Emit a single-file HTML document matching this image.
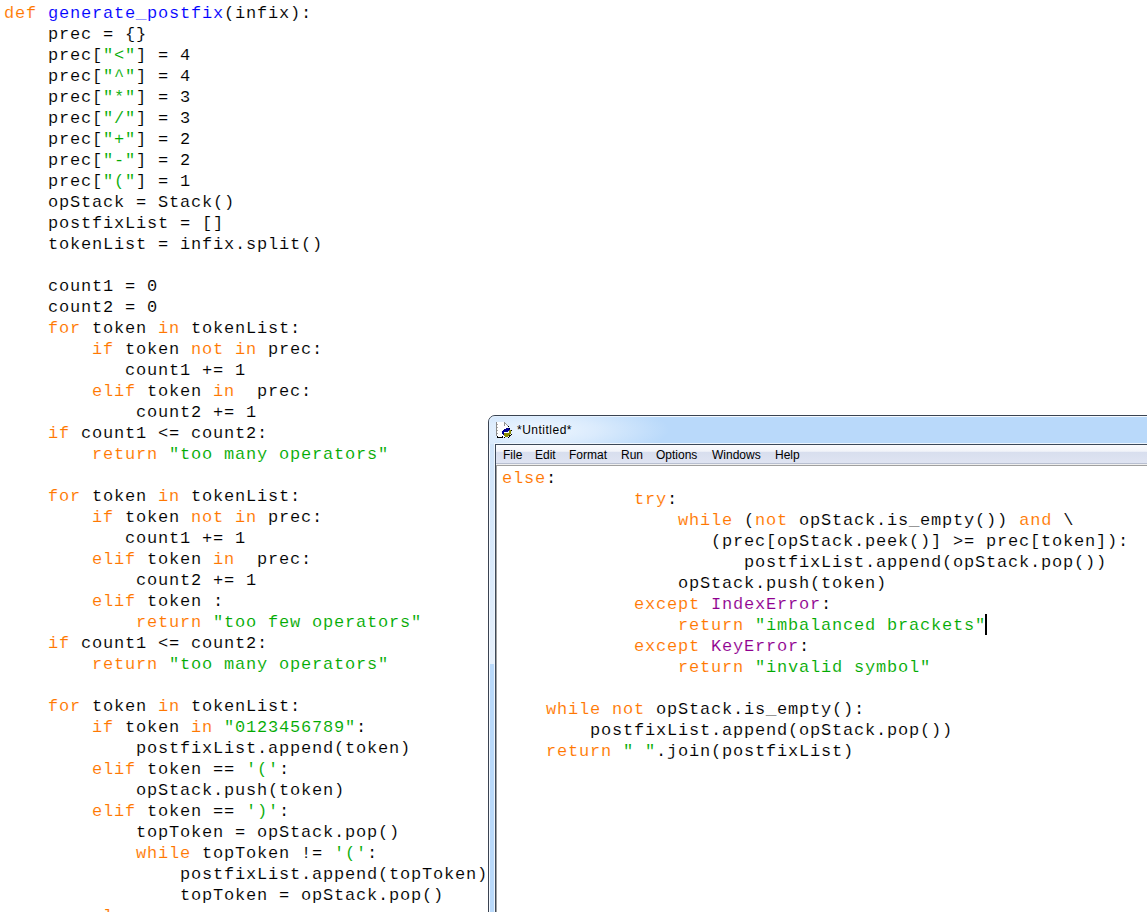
<!DOCTYPE html>
<html><head><meta charset="utf-8">
<style>
html,body{margin:0;padding:0;background:#fff;width:1147px;height:912px;overflow:hidden;position:relative}
.code{position:absolute;margin:0;-webkit-text-stroke:0.1px #fff;font-family:"Liberation Mono",monospace;font-size:17px;letter-spacing:0.8px;line-height:21px;color:#000;white-space:pre}
.k{color:#ff7700}.s{color:#00aa00}.d{color:#0000ff}.b{color:#900090}
#main{left:4px;top:3px}
#win{position:absolute;left:0;top:0;width:1147px;height:912px}
#win>div,#win>svg,#win>pre{position:absolute}
#frame{left:488px;top:415px;width:720px;height:560px;box-sizing:border-box;border:1px solid #3a4351;border-radius:7px 0 0 0;background:#b9d9fa;box-shadow:inset 1px 1px 0 #f4f9ff}
#lframe{left:490px;top:423px;width:5px;height:241px;background:linear-gradient(#d0e4fa 0%,#d3e6fa 30%,#dcebfb 70%,#e6f0fb 100%)}
#glow{left:489px;top:416px;width:200px;height:28px;border-radius:6px 0 0 0;background:radial-gradient(ellipse 130px 30px at 25% 50%,rgba(238,246,255,1) 0%,rgba(222,237,253,0.9) 45%,rgba(185,217,250,0) 100%)}
#icon{left:495px;top:421px}
#title{left:517px;top:423px;letter-spacing:0.5px;font-family:"Liberation Sans",sans-serif;font-size:12px;line-height:14px;color:#000}
#client{left:495px;top:444px;width:700px;height:500px;background:#fff;border-left:1px solid #3c4858;border-top:1px solid #3c4858;box-shadow:-1px -1px 0 #eef6fe}
#menu{left:496px;top:445px;width:700px;height:18px;background:linear-gradient(#fbfcfe 0%,#f1f3f9 35%,#d8deee 40%,#dfe4f2 100%)}
#menu span{position:absolute;top:3px;font-family:"Liberation Sans",sans-serif;font-size:12px;line-height:14px;color:#000}
#m1{left:7px}#m2{left:39px}#m3{left:73px}#m4{left:125px}#m5{left:160px}#m6{left:216px}#m7{left:279px}
#mline1{left:496px;top:463px;width:700px;height:1px;background:#b8bfd0}
#mline2{left:496px;top:464px;width:700px;height:1px;background:#f0f0f0}
#mline3{left:496px;top:465px;width:700px;height:1px;background:#a0a0a0}
#txt{left:496px;top:466px;width:1px;height:460px;background:#a0a0a0}
#wcode{left:502px;top:468px}
#cursor{left:985px;top:614px;width:2px;height:21px;background:#000}
</style></head><body>
<pre class="code" id="main"><span class="k">def</span> <span class="d">generate_postfix</span>(infix):
    prec = {}
    prec[<span class="s">"&lt;"</span>] = 4
    prec[<span class="s">"^"</span>] = 4
    prec[<span class="s">"*"</span>] = 3
    prec[<span class="s">"/"</span>] = 3
    prec[<span class="s">"+"</span>] = 2
    prec[<span class="s">"-"</span>] = 2
    prec[<span class="s">"("</span>] = 1
    opStack = Stack()
    postfixList = []
    tokenList = infix.split()

    count1 = 0
    count2 = 0
    <span class="k">for</span> token <span class="k">in</span> tokenList:
        <span class="k">if</span> token <span class="k">not</span> <span class="k">in</span> prec:
           count1 += 1
        <span class="k">elif</span> token <span class="k">in</span>  prec:
            count2 += 1
    <span class="k">if</span> count1 &lt;= count2:
        <span class="k">return</span> <span class="s">"too many operators"</span>

    <span class="k">for</span> token <span class="k">in</span> tokenList:
        <span class="k">if</span> token <span class="k">not</span> <span class="k">in</span> prec:
           count1 += 1
        <span class="k">elif</span> token <span class="k">in</span>  prec:
            count2 += 1
        <span class="k">elif</span> token :
            <span class="k">return</span> <span class="s">"too few operators"</span>
    <span class="k">if</span> count1 &lt;= count2:
        <span class="k">return</span> <span class="s">"too many operators"</span>

    <span class="k">for</span> token <span class="k">in</span> tokenList:
        <span class="k">if</span> token <span class="k">in</span> <span class="s">"0123456789"</span>:
            postfixList.append(token)
        <span class="k">elif</span> token == <span class="s">'('</span>:
            opStack.push(token)
        <span class="k">elif</span> token == <span class="s">')'</span>:
            topToken = opStack.pop()
            <span class="k">while</span> topToken != <span class="s">'('</span>:
                postfixList.append(topToken)
                topToken = opStack.pop()
        <span class="k">else</span>:
</pre>
<div id="win">
 <div id="frame"></div>
 <div id="lframe"></div>
 <div id="glow"></div>
 <svg id="icon" width="18" height="18" viewBox="0 0 18 18" shape-rendering="crispEdges"><rect x="2" y="1" width="7" height="15" fill="#fff"/><rect x="9" y="5" width="4" height="11" fill="#fff"/><rect x="9" y="2" width="1" height="3" fill="#fff"/><rect x="10" y="3" width="1" height="2" fill="#fff"/><rect x="11" y="4" width="2" height="1" fill="#fff"/><rect x="1" y="1" width="1" height="14" fill="#8c8c8c"/><rect x="2" y="3" width="1" height="1" fill="#a8a8a8"/><rect x="2" y="6" width="1" height="1" fill="#a8a8a8"/><rect x="2" y="9" width="1" height="1" fill="#a8a8a8"/><rect x="2" y="12" width="1" height="1" fill="#a8a8a8"/><rect x="9" y="1" width="1" height="4" fill="#909090"/><rect x="10" y="2" width="1" height="1" fill="#9a9a9a"/><rect x="11" y="3" width="1" height="1" fill="#9a9a9a"/><rect x="12" y="4" width="1" height="1" fill="#9a9a9a"/><rect x="13" y="5" width="1" height="1" fill="#000"/><rect x="14" y="7" width="1" height="1" fill="#000"/><rect x="14" y="8" width="1" height="1" fill="#000"/><rect x="16" y="9" width="1" height="1" fill="#000"/><rect x="16" y="13" width="1" height="1" fill="#000"/><rect x="15" y="14" width="1" height="1" fill="#000"/><rect x="14" y="14" width="1" height="1" fill="#000"/><rect x="14" y="15" width="1" height="1" fill="#000"/><rect x="13" y="16" width="1" height="1" fill="#000"/><rect x="9" y="16" width="1" height="1" fill="#000"/><rect x="2" y="15" width="1" height="2" fill="#000"/><rect x="3" y="16" width="4" height="1" fill="#000"/><rect x="7" y="15" width="1" height="2" fill="#000"/><rect x="11" y="7" width="3" height="1" fill="#000090"/><rect x="9" y="8" width="6" height="1" fill="#000090"/><rect x="8" y="9" width="6" height="1" fill="#000090"/><rect x="7" y="10" width="6" height="1" fill="#000090"/><rect x="7" y="11" width="2" height="1" fill="#000090"/><rect x="7" y="12" width="2" height="1" fill="#000090"/><rect x="8" y="13" width="1" height="1" fill="#000090"/><rect x="14" y="9" width="2" height="1" fill="#8a8a00"/><rect x="14" y="10" width="2" height="1" fill="#8a8a00"/><rect x="14" y="11" width="2" height="1" fill="#8a8a00"/><rect x="9" y="12" width="7" height="1" fill="#8a8a00"/><rect x="9" y="13" width="6" height="1" fill="#8a8a00"/><rect x="9" y="14" width="5" height="1" fill="#8a8a00"/><rect x="10" y="15" width="3" height="1" fill="#8a8a00"/></svg>
 <div id="title">*Untitled*</div>
 <div id="client"></div>
 <div id="menu"><span id="m1">File</span><span id="m2">Edit</span><span id="m3">Format</span><span id="m4">Run</span><span id="m5">Options</span><span id="m6">Windows</span><span id="m7">Help</span></div>
 <div id="mline1"></div><div id="mline2"></div><div id="mline3"></div>
 <div id="txt"></div>
 <pre class="code" id="wcode"><span class="k">else</span>:
            <span class="k">try</span>:
                <span class="k">while</span> (<span class="k">not</span> opStack.is_empty()) <span class="k">and</span> \
                   (prec[opStack.peek()] &gt;= prec[token]):
                      postfixList.append(opStack.pop())
                opStack.push(token)
            <span class="k">except</span> <span class="b">IndexError</span>:
                <span class="k">return</span> <span class="s">"imbalanced brackets"</span>
            <span class="k">except</span> <span class="b">KeyError</span>:
                <span class="k">return</span> <span class="s">"invalid symbol"</span>

    <span class="k">while</span> <span class="k">not</span> opStack.is_empty():
        postfixList.append(opStack.pop())
    <span class="k">return</span> <span class="s">" "</span>.join(postfixList)
</pre>
 <div id="cursor"></div>
</div>
</body></html>
